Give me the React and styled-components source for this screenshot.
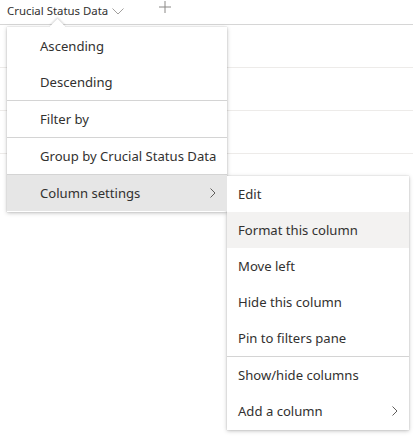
import React from "react";
import styled, { createGlobalStyle } from "styled-components";

const GlobalStyle = createGlobalStyle`
  html, body {
    margin: 0;
    padding: 0;
    background: #fff;
  }
  body {
    font-family: "Noto Sans", "Open Sans", sans-serif;
    color: #323130;
  }
`;

const mainItems = [
  { label: "Ascending" },
  { label: "Descending", divider: true },
  { label: "Filter by", divider: true },
  { label: "Group by Crucial Status Data", divider: true },
  { label: "Column settings", sub: true, active: true },
];

const subItems = [
  { label: "Edit" },
  { label: "Format this column", hover: true },
  { label: "Move left" },
  { label: "Hide this column" },
  { label: "Pin to filters pane", divider: true },
  { label: "Show/hide columns" },
  { label: "Add a column", sub: true },
];

const Chevron = () => (
  <svg width="8" height="12" viewBox="0 0 8 12">
    <path d="M1.5 1.5 L6 6 L1.5 10.5" fill="none" stroke="#605e5c" strokeWidth="1" />
  </svg>
);

const MenuList = ({ items }) =>
  items.map((item) => (
    <React.Fragment key={item.label}>
      <Item $active={item.active} $hover={item.hover}>
        <span>{item.label}</span>
        {item.sub && <Chevron />}
      </Item>
      {item.divider && <Divider />}
    </React.Fragment>
  ));

const App = () => {
  return (
    <Page>
      <GlobalStyle />
      <Header>
        <HeaderCell>
          Crucial Status Data
          <svg width="12" height="7" viewBox="0 0 12 7">
            <path d="M0.5 0.5 L6 6 L11.5 0.5" fill="none" stroke="#a19f9d" strokeWidth="1" />
          </svg>
        </HeaderCell>
        <AddButton>
          <svg width="12" height="12" viewBox="0 0 12 12">
            <path d="M6 0 V12 M0 6 H12" stroke="#8a8886" strokeWidth="1" />
          </svg>
        </AddButton>
      </Header>
      <Row />
      <Row />
      <Row />

      <Menu>
        <Beak />
        <MenuList items={mainItems} />
      </Menu>
      <SubMenu>
        <MenuList items={subItems} />
      </SubMenu>
    </Page>
  );
};

const Page = styled.div`
  position: relative;
  width: 415px;
  height: 436px;
  overflow: hidden;
`;

const Header = styled.div`
  display: flex;
  align-items: center;
  height: 25px;
  margin-right: 2px;
  border-bottom: 1px solid #d6d6d6;
  box-sizing: border-box;
  padding-left: 7px;
`;

const HeaderCell = styled.div`
  display: flex;
  align-items: center;
  gap: 4px;
  font-size: 11.4px;
  color: #323130;
  padding-bottom: 4px;

  svg {
    margin-top: 2px;
  }
`;

const AddButton = styled.div`
  display: flex;
  margin-left: 35px;
  margin-bottom: 10px;
`;

const Row = styled.div`
  height: 43px;
  margin-right: 2px;
  border-bottom: 1px solid #edebe9;
  box-sizing: border-box;
`;

const Menu = styled.div`
  position: absolute;
  left: 7px;
  top: 27px;
  width: 220px;
  padding: 1px 0 1px;
  background: #fff;
  box-shadow: 0 1px 4px rgba(0, 0, 0, 0.25), 0 0 1px rgba(0, 0, 0, 0.2);
`;

const Beak = styled.div`
  position: absolute;
  left: 45px;
  top: -6px;
  width: 11px;
  height: 11px;
  background: #fff;
  transform: rotate(45deg);
  box-shadow: -1px -1px 2px rgba(0, 0, 0, 0.15);
  z-index: 0;
`;

const SubMenu = styled.div`
  position: absolute;
  left: 227px;
  top: 176px;
  width: 182px;
  padding-bottom: 1px;
  background: #fff;
  box-shadow: 0 1px 4px rgba(0, 0, 0, 0.25), 0 0 1px rgba(0, 0, 0, 0.2);
`;

const Item = styled.div`
  position: relative;
  z-index: 1;
  display: flex;
  align-items: center;
  justify-content: space-between;
  height: 36px;
  padding: 0 10px 0 33px;
  font-size: 13.1px;
  color: #323130;
  background: ${(p) => (p.$active ? "#e6e6e6" : p.$hover ? "#f3f2f1" : "#fff")};

  ${SubMenu} & {
    padding-left: 11px;
  }
`;

const Divider = styled.div`
  height: 1px;
  background: #d4d4d4;
`;

export default App;
